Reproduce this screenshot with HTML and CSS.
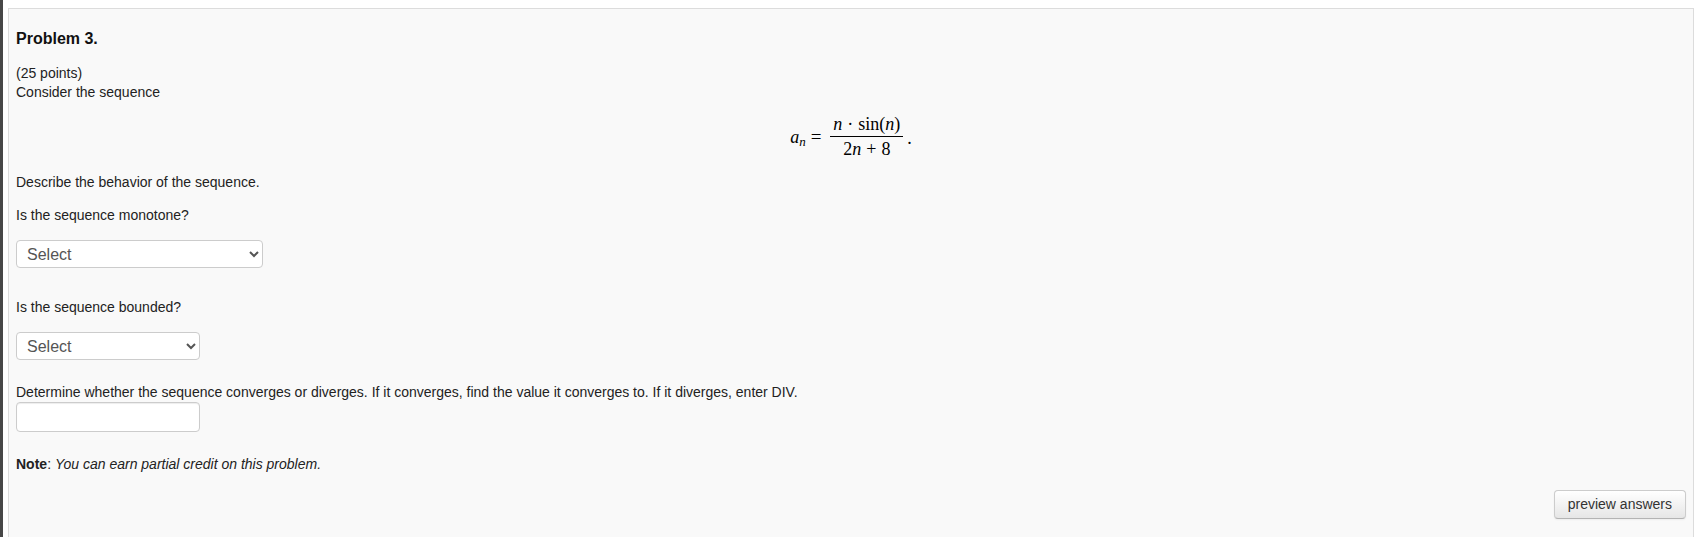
FILE: index.html
```html
<!DOCTYPE html>
<html lang="en">
<head>
    <meta charset="UTF-8">
    <meta name="viewport" content="width=device-width, initial-scale=1.0">
    <title>Problem 3</title>
    <link rel="stylesheet" href="styles.css">
</head>
<body>
    <div id="problem">
        <h3 id="problem-title">Problem 3.</h3>

        <div id="problem-body">
            <p class="intro">(25 points)<br>Consider the sequence</p>

            <div class="math">
                <span class="math-lhs"><i>a</i><sub><i>n</i></sub></span>
                <span class="math-eq">=</span>
                <span class="frac">
                    <span class="frac-num"><i>n</i><span class="op">&middot;</span>sin(<i>n</i>)</span>
                    <span class="frac-den">2<i>n</i><span class="op">+</span>8</span>
                </span>
                <span class="math-dot">.</span>
            </div>

            <p class="describe">Describe the behavior of the sequence.</p>

            <p class="question">Is the sequence monotone?</p>
            <select class="answer-select monotone">
                <option>Select</option>
                <option>increasing</option>
                <option>decreasing</option>
                <option>not monotone</option>
            </select>

            <p class="question bounded">Is the sequence bounded?</p>
            <select class="answer-select">
                <option>Select</option>
                <option>bounded</option>
                <option>not bounded</option>
            </select>

            <p class="question limit">Determine whether the sequence converges or diverges. If it converges, find the value it converges to. If it diverges, enter DIV.</p>
            <input type="text" class="answer-input">

            <p class="note"><b>Note</b>: <i>You can earn partial credit on this problem.</i></p>
        </div>

        <div id="actions">
            <button class="btn">preview answers</button>
        </div>
    </div>
</body>
</html>
```

FILE: styles.css
```css
html {
    min-height: 100%;
    border-left: 3px solid #474747;
    background-color: #fff;
}

body {
    margin: 8px 8px 0 5px;
    font-family: "Liberation Sans", Arial, Helvetica, sans-serif;
    font-size: 14px;
    line-height: 19px;
    color: #222;
}

#problem {
    background-color: #f9f9f9;
    border: 1px solid #dcdcdc;
    border-bottom: none;
    padding: 20px 7px 20px 7px;
    min-height: 520px;
}

#problem-title {
    margin: 0;
    font-size: 16px;
    line-height: 20px;
    font-weight: bold;
    color: #111;
}

#problem-body p {
    margin: 0;
}

.intro {
    margin-top: 15px !important;
}

/* display math */
.math {
    display: flex;
    justify-content: center;
    align-items: center;
    margin-top: 12px;
    font-family: "Liberation Serif", "Times New Roman", serif;
    font-size: 18px;
    line-height: 20px;
    color: #000;
}

.math-lhs sub {
    font-size: 13px;
    line-height: 0;
    vertical-align: -3px;
}

.math-eq {
    margin: 0 6px 0 5px;
    font-size: 19px;
}

.frac {
    display: inline-flex;
    flex-direction: column;
    align-items: center;
    padding: 0 3px;
}

.frac-num {
    padding: 0 3px 2px;
    border-bottom: 1px solid #000;
}

.frac-den {
    padding: 2px 2px 0;
}

.op {
    margin: 0 5px;
}

.math-dot {
    margin-left: 1px;
    margin-top: 2px;
}

#problem-body .describe {
    margin-top: 14px;
}

#problem-body .question {
    margin-top: 14px;
}

#problem-body .bounded {
    margin-top: 30px;
}

#problem-body .limit {
    margin-top: 23px;
}

.answer-select {
    display: block;
    margin-top: 15px;
    width: 184px;
    height: 28px;
    padding: 0 6px;
    font-family: "Liberation Sans", Arial, sans-serif;
    font-size: 16px;
    color: #555;
    background-color: #fff;
    border: 1px solid #ccc;
    border-radius: 4px;
}

.answer-select.monotone {
    width: 247px;
}

.answer-input {
    display: block;
    box-sizing: border-box;
    width: 184px;
    height: 30px;
    padding: 4px 6px;
    font-size: 14px;
    background-color: #fff;
    border: 1px solid #ccc;
    border-radius: 4px;
    box-shadow: inset 0 1px 1px rgba(0, 0, 0, 0.075);
}

#problem-body .note {
    margin-top: 23px;
}

#actions {
    display: flex;
    justify-content: flex-end;
    margin-top: 16px;
}

.btn {
    font-family: "Liberation Sans", Arial, sans-serif;
    font-size: 14px;
    line-height: 19px;
    padding: 4px 13px;
    color: #333;
    background-image: linear-gradient(#ffffff, #e6e6e6);
    border: 1px solid #ccc;
    border-bottom-color: #b3b3b3;
    border-radius: 4px;
    box-shadow: inset 0 1px 0 rgba(255, 255, 255, 0.2), 0 1px 2px rgba(0, 0, 0, 0.05);
}
```
